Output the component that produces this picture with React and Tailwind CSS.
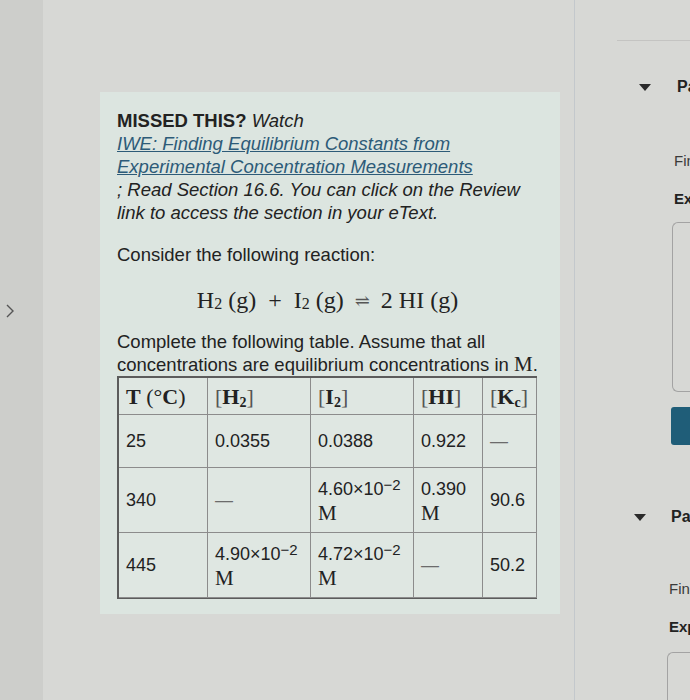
const sans = { fontFamily: '"Liberation Sans", Arial, sans-serif' }

function Dash() {
  return <span className="text-[#6b6b6b]">—</span>
}

function Sci({ base, exp }) {
  return (
    <div className="leading-[26px]">
      <div>
        {base}
        <sup className="text-[15px] relative -top-[5px]">{exp}</sup>
      </div>
      <div className="font-['Liberation_Serif',serif] text-[21px] leading-[22px]">M</div>
    </div>
  )
}

const cell = 'flex items-center pl-[7px] border-r border-b border-[#8c8c8c]'
const head = cell + ' pl-[6px] font-["Liberation_Serif",serif] text-[22px]'

function Bracket({ children }) {
  return (
    <>
      <span className="text-[#555] font-normal">[</span>
      <b>{children}</b>
      <span className="text-[#555] font-normal">]</span>
    </>
  )
}

export default function App() {
  return (
    <div
      className="w-[690px] h-[700px] flex overflow-hidden bg-[#d7d8d5] text-[#222]"
      style={sans}
    >
      {/* left strip */}
      <div className="w-[43px] bg-[#cdcecb] flex flex-col">
        <svg className="mt-[303px] ml-[5px]" width="10" height="16" viewBox="0 0 10 16">
          <path d="M2 2 L8 8 L2 14" fill="none" stroke="#555" strokeWidth="1.4" />
        </svg>
      </div>

      {/* main */}
      <div className="w-[532px] border-r border-[#c3c8cc] pt-[92px] pl-[57px]">
        <div className="w-[460px] h-[522px] bg-[#dce5e0] pt-[17px] pl-[17px] text-[18.5px] leading-[23px]">
          <p>
            <b>MISSED THIS?</b> <i>Watch</i>
            <br />
            <a className="italic underline text-[#2d5b78]">
              IWE: Finding Equilibrium Constants from
              <br />
              Experimental Concentration Measurements
            </a>
            <br />
            <i>; Read Section 16.6. You can click on the Review
              <br />
              link to access the section in your eText.</i>
          </p>

          <p className="mt-[19px]">Consider the following reaction:</p>

          <div className="mt-[20px] h-[28px] flex items-center justify-center pr-[22px] font-['Liberation_Serif','DejaVu_Serif',serif] text-[24px] whitespace-nowrap">
            <span>H<sub className="text-[16px] relative top-[1px]">2</sub> (g)</span>
            <span className="mx-[12px]">+</span>
            <span>I<sub className="text-[16px] relative top-[1px]">2</sub> (g)</span>
            <span className="font-['DejaVu_Serif',serif] text-[18px] text-[#555] mx-[11px]">⇌</span>
            <span>2 HI (g)</span>
          </div>

          <p className="mt-[16px]">
            Complete the following table. Assume that all
            <br />
            concentrations are equilibrium concentrations in{' '}
            <span className="font-['Liberation_Serif',serif] text-[21px]">M</span>.
          </p>

          <div className="w-[420px] grid grid-cols-[89px_103px_103px_69px_54px] grid-rows-[37px_53px_65px_65px] border-2 border-r border-b-[1px] border-[#5c5c5c] bg-[#dfe7e2] text-[18px]">
            {/* header */}
            <div className={head}>
              <b>T</b>&nbsp;(°<b>C</b>)
            </div>
            <div className={head}>
              <Bracket>H<sub className="text-[14px]">2</sub></Bracket>
            </div>
            <div className={head}>
              <Bracket>I<sub className="text-[14px]">2</sub></Bracket>
            </div>
            <div className={head}>
              <Bracket>HI</Bracket>
            </div>
            <div className={head}>
              <Bracket>K<sub className="text-[14px]">c</sub></Bracket>
            </div>

            {/* 25 */}
            <div className={cell}>25</div>
            <div className={cell}>0.0355</div>
            <div className={cell}>0.0388</div>
            <div className={cell}>0.922</div>
            <div className={cell}><Dash /></div>

            {/* 340 */}
            <div className={cell}>340</div>
            <div className={cell}><Dash /></div>
            <div className={cell}><Sci base="4.60×10" exp="−2" /></div>
            <div className={cell}>
              <div className="leading-[26px]">
                <div>0.390</div>
                <div className="font-['Liberation_Serif',serif] text-[21px] leading-[22px]">M</div>
              </div>
            </div>
            <div className={cell}>90.6</div>

            {/* 445 */}
            <div className={cell}>445</div>
            <div className={cell}><Sci base="4.90×10" exp="−2" /></div>
            <div className={cell}><Sci base="4.72×10" exp="−2" /></div>
            <div className={cell}><Dash /></div>
            <div className={cell}>50.2</div>
          </div>
        </div>
      </div>

      {/* right column */}
      <div className="flex-1 overflow-hidden whitespace-nowrap pt-[40px]">
        <div className="ml-[42px] border-t border-[#c4c4c2]" />

        <div className="mt-[37px] h-[18px] flex items-center">
          <svg className="ml-[64px] shrink-0" width="12" height="7" viewBox="0 0 12 7">
            <path d="M0 0 H12 L6 7 Z" fill="#2a2a2a" />
          </svg>
          <span className="ml-[26px] shrink-0 font-bold text-[16px]">Part A</span>
        </div>

        <div className="mt-[55px] ml-[99px] text-[15px] leading-[20px] text-[#3a3a3a]">Find the value</div>
        <div className="mt-[18px] ml-[99px] text-[15px] leading-[20px] font-bold">Express</div>

        <div className="mt-[13px] ml-[97px] h-[170px] border border-[#a3a3a3] rounded-l-[6px] border-r-0" />
        <div className="mt-[15px] ml-[96px] h-[38px] bg-[#1f5d78] rounded-l-[3px]" />

        <div className="mt-[63px] h-[18px] flex items-center">
          <svg className="ml-[59px] shrink-0" width="12" height="7" viewBox="0 0 12 7">
            <path d="M0 0 H12 L6 7 Z" fill="#2a2a2a" />
          </svg>
          <span className="ml-[25px] shrink-0 font-bold text-[16px]">Part B</span>
        </div>

        <div className="mt-[53px] ml-[94px] text-[15px] leading-[20px] text-[#3a3a3a]">Find the value</div>
        <div className="mt-[18px] ml-[94px] text-[15px] leading-[20px] font-bold">Express</div>

        <div className="mt-[15px] ml-[92px] h-[80px] border border-[#a3a3a3] rounded-tl-[6px] border-r-0 border-b-0" />
      </div>
    </div>
  )
}
